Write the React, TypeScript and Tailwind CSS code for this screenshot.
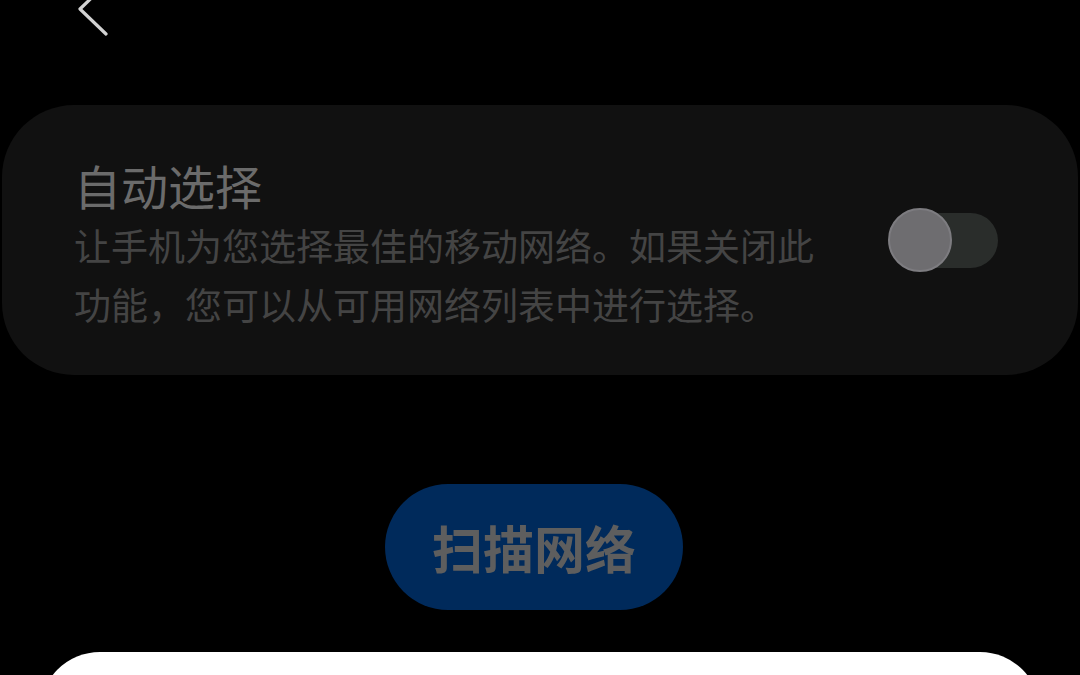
import React from 'react';

const cjk = { fontFamily: '"Noto Sans CJK SC", "Noto Sans", sans-serif' };

function BackChevron() {
  return (
    <svg width="48" height="48" viewBox="0 0 48 48" className="ml-[68px] block overflow-hidden" fill="none">
      <path d="M38 -16 L12 9 L38 34" stroke="#d2d2d2" strokeWidth="3.2" strokeLinecap="round" strokeLinejoin="round" />
    </svg>
  );
}

function Toggle({ on }: { on: boolean }) {
  return (
    <div className="relative w-[110px] h-[64px] flex items-center justify-end">
      <div className="w-[94px] h-[55px] rounded-full bg-[#2a2d2b]" />
      <div
        className={
          on
            ? 'absolute right-0 top-0 w-[64px] h-[64px] rounded-full bg-[#6e6d70] border-2 border-[#858488]'
            : 'absolute left-0 top-0 w-[64px] h-[64px] rounded-full bg-[#6e6d70] border-2 border-[#7d7c80]'
        }
      />
    </div>
  );
}

export default function App() {
  const [auto, setAuto] = React.useState(false);

  return (
    <div className="w-[1080px] h-[675px] bg-black overflow-hidden flex flex-col" style={cjk}>
      <div className="h-[105px] shrink-0">
        <BackChevron />
      </div>

      <div className="ml-[2px] w-[1076px] h-[270px] shrink-0 rounded-[72px] bg-[#111111] flex items-center justify-between pl-[72px] pr-[80px]">
        <div className="pt-[10px]">
          <div className="text-[47px] leading-[58px] text-[#6b6b6b]">自动选择</div>
          <div className="mt-[2px] text-[37px] leading-[59px] text-[#444444]">
            让手机为您选择最佳的移动网络。如果关闭此
            <br />
            功能，您可以从可用网络列表中进行选择。
          </div>
        </div>
        <button onClick={() => setAuto(!auto)}>
          <Toggle on={auto} />
        </button>
      </div>

      <div className="mt-[109px] ml-[385px] shrink-0">
        <button className="w-[298px] h-[126px] rounded-full bg-[#002a5b] flex items-center justify-center">
          <span className="text-[51px] font-bold leading-none text-[#5e5e5e]">扫描网络</span>
        </button>
      </div>

      <div className="mt-[42px] mx-[40px] h-[200px] shrink-0 rounded-t-[60px] bg-white" />
    </div>
  );
}
